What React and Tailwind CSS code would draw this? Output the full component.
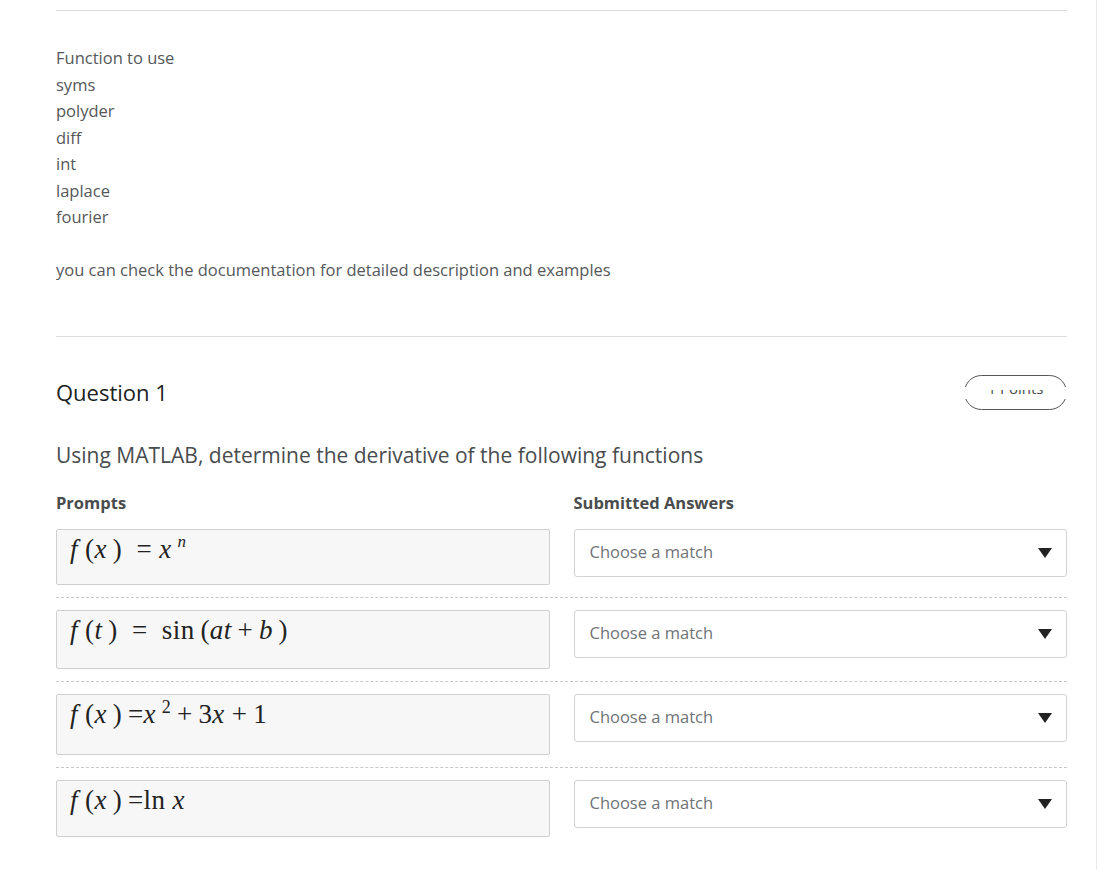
const TOOLS = ["Function to use", "syms", "polyder", "diff", "int", "laplace", "fourier"];

const serif = { fontFamily: '"Liberation Serif", "Times New Roman", serif' };

const ROWS = [
  {
    h: "h-[56px]",
    sep: true,
    math: (
      <>
        <i>f</i>&nbsp;(<i>x</i>&thinsp;)&nbsp;&nbsp;=&nbsp;<i>x</i>&thinsp;
        <sup className="text-[17px] relative -top-[11px]"><i>n</i></sup>
      </>
    ),
  },
  {
    h: "h-[59px]",
    sep: true,
    math: (
      <>
        <i>f</i>&nbsp;(<i>t</i>&thinsp;)&nbsp;&nbsp;=&nbsp;&nbsp;sin&thinsp;(<i>at</i>&thinsp;+&thinsp;<i>b</i>&thinsp;)
      </>
    ),
  },
  {
    h: "h-[61px]",
    sep: true,
    math: (
      <>
        <i>f</i>&nbsp;(<i>x</i>&thinsp;)&thinsp;=<i>x</i>&thinsp;
        <sup className="text-[18px] relative -top-[10px]">2</sup>&thinsp;+&thinsp;3<i>x</i>&nbsp;+&thinsp;1
      </>
    ),
  },
  {
    h: "h-[57px]",
    sep: false,
    math: (
      <>
        <i>f</i>&nbsp;(<i>x</i>&thinsp;)&thinsp;=ln&nbsp;<i>x</i>
      </>
    ),
  },
];

function MatchRow({ row }) {
  return (
    <div className={row.sep ? "border-b border-dashed border-[#c8c8c8] pb-[12px] mb-[12px]" : ""}>
      <div className="grid grid-cols-2 gap-[24px] items-start">
        <div className={`${row.h} bg-[#f7f7f7] border border-[#cfcfcf] rounded-[2px] pl-[13px] pt-[1px]`}>
          <div className="text-[27px] leading-[36px] tracking-[0.015em] text-[#222] whitespace-nowrap" style={serif}>
            {row.math}
          </div>
        </div>
        <div className="h-[48px] bg-white border border-[#d3d3d3] rounded-[3px] flex items-center justify-between pl-[15px] pr-[14px]">
          <span className="text-[16.5px] text-[#6e7376]">Choose a match</span>
          <svg width="14" height="10" viewBox="0 0 14 10">
            <path d="M0 0 H14 L7 10 Z" fill="#222" />
          </svg>
        </div>
      </div>
    </div>
  );
}

export default function App() {
  return (
    <div className="min-h-[870px] w-[1097px] bg-white border-r border-[#e8e8e8]" style={{ fontFamily: '"Open Sans", "Noto Sans", sans-serif' }}>
      <div className="ml-[56px] w-[1011px]">
        <div className="pt-[10px] border-b border-[#dcdcdc]" />

        <div className="pt-[34px] text-[16.5px] leading-[26.5px] text-[#55585a]">
          {TOOLS.map((t) => (
            <div key={t}>{t}</div>
          ))}
          <div className="mt-[26.5px]">you can check the documentation for detailed description and examples</div>
        </div>

        <div className="mt-[52px] border-b border-[#dcdcdc]" />

        <div className="flex items-center justify-between mt-[38px]">
          <h2 className="text-[22px] leading-[34px] text-[#202122]">Question 1</h2>
          <div className="relative w-[103px] h-[35px] rounded-full border border-[#555] flex items-center justify-center">
            <span className="absolute left-[-1px] top-[11px] h-[12px] w-[5px] bg-white" />
            <span className="absolute right-[-1px] top-[11px] h-[12px] w-[5px] bg-white" />
            <div className="h-[7px] overflow-hidden mt-[3px]">
              <div className="text-[15px] leading-[18px] -mt-[11px] text-[#494c4e]">1 Points</div>
            </div>
          </div>
        </div>

        <p className="mt-[30px] text-[21px] leading-[30px] text-[#494c4e]">
          Using MATLAB, determine the derivative of the following functions
        </p>

        <div className="grid grid-cols-2 gap-[24px] mt-[21px] text-[16.5px] leading-[24px] font-bold text-[#494c4e]">
          <div>Prompts</div>
          <div>Submitted Answers</div>
        </div>

        <div className="mt-[14px]">
          {ROWS.map((r, i) => (
            <MatchRow key={i} row={r} />
          ))}
        </div>
      </div>
    </div>
  );
}
